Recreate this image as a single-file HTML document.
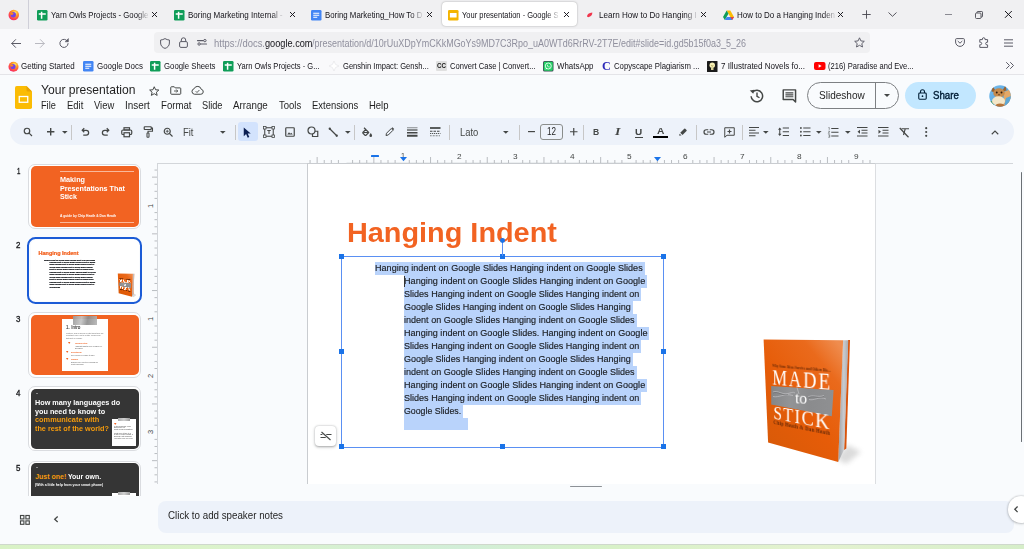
<!DOCTYPE html>
<html lang="en">
<head>
<meta charset="utf-8">
<title>Your presentation - Google Slides</title>
<style>
*{box-sizing:border-box;margin:0;padding:0}
html,body{width:1024px;height:549px;overflow:hidden;background:#f9fbfd;font-family:"Liberation Sans",sans-serif;color:#1f1f1f}
#root{position:relative;width:1024px;height:549px;overflow:hidden}
.a{position:absolute}
.t{position:absolute;white-space:nowrap;line-height:1}
svg{position:absolute;overflow:visible}
/* browser chrome */
#tabbar{left:0;top:0;width:1024px;height:29px;background:#f0f0f2}
#navbar{left:0;top:29px;width:1024px;height:27px;background:#f9f9fb}
#bmbar{left:0;top:56px;width:1024px;height:19px;background:#f9f9fb;border-bottom:1px solid #e4e4e8}
#urlbox{left:154px;top:32px;width:716px;height:21px;background:#f0f0f2;border-radius:4px}
#acttab{left:442.300px;top:2.400px;width:135px;height:24px;background:#fff;border-radius:4px;box-shadow:0 0 2px rgba(0,0,0,.35)}
.tab{font-size:10px;color:#15141a;top:10px}
.bm{font-size:10px;color:#15141a;top:62px}
/* slides */
#toolbar{left:10px;top:118.400px;width:1003.500px;height:26.700px;background:#edf2fa;border-radius:14px}
.menu{font-size:11px;color:#1f1f1f;top:101px}
</style>
</head>
<body>
<div id="root">
<!-- ===== BROWSER ===== -->
<div id="tabbar" class="a"></div>
<div id="navbar" class="a"></div>
<div id="bmbar" class="a"></div>
<div id="urlbox" class="a"></div>
<div id="acttab" class="a"></div>
<svg style="left:7.5px;top:9px" width="11.5" height="11.5" viewBox="0 0 24 24"><defs><radialGradient id="ffg7_9" cx="0.62" cy="0.3" r="0.85"><stop offset="0" stop-color="#fff36d"/><stop offset="0.35" stop-color="#ff9a1f"/><stop offset="0.7" stop-color="#ff3f4e"/><stop offset="1" stop-color="#e31587"/></radialGradient></defs><circle cx="12" cy="12.5" r="11" fill="url(#ffg7_9)"/><circle cx="11" cy="12" r="5.6" fill="#7542e5"/><path d="M5 8.5C7.5 7 10 7.2 12 9L9 12.5 5.5 12Z" fill="#ff8a16"/></svg>
<div class="a" style="left:28px;top:0;width:1px;height:29px;background:#cfcfd8"></div>
<svg style="left:37px;top:9.5px" width="10.5" height="10.5" viewBox="0 0 21 21"><rect width="21" height="21" rx="2.5" fill="#0f9d58"/><path d="M3.5 8.2H17.5M9.2 3.5V17.5" stroke="#fff" stroke-width="3" fill="none"/></svg>
<span class="t" style='left:50.70px;top:10.61px;font-size:9px;color:#15141a;transform:scaleX(0.8620);transform-origin:0 50%;-webkit-mask-image:linear-gradient(90deg,#000 88%,rgba(0,0,0,.12) 100%);mask-image:linear-gradient(90deg,#000 88%,rgba(0,0,0,.12) 100%);'>Yarn Owls Projects - Google</span>
<svg style="left:152.3px;top:12.3px" width="5.0" height="5.0" viewBox="0 0 5.0 5.0"><path d="M0 0L5.0 5.0M5.0 0L0 5.0" stroke="#15141a" stroke-width="0.95" fill="none"/></svg>
<svg style="left:174px;top:9.5px" width="10.5" height="10.5" viewBox="0 0 21 21"><rect width="21" height="21" rx="2.5" fill="#0f9d58"/><path d="M3.5 8.2H17.5M9.2 3.5V17.5" stroke="#fff" stroke-width="3" fill="none"/></svg>
<span class="t" style='left:188.00px;top:10.61px;font-size:9px;color:#15141a;transform:scaleX(0.8935);transform-origin:0 50%;-webkit-mask-image:linear-gradient(90deg,#000 88%,rgba(0,0,0,.12) 100%);mask-image:linear-gradient(90deg,#000 88%,rgba(0,0,0,.12) 100%);'>Boring Marketing Internal - </span>
<svg style="left:289.5px;top:12.3px" width="5.0" height="5.0" viewBox="0 0 5.0 5.0"><path d="M0 0L5.0 5.0M5.0 0L0 5.0" stroke="#15141a" stroke-width="0.95" fill="none"/></svg>
<svg style="left:311px;top:9.5px" width="10.5" height="10.5" viewBox="0 0 21 21"><rect width="21" height="21" rx="2.5" fill="#4285f4"/><path d="M4.5 6.5H16.5M4.5 10.5H16.5M4.5 14.5H12.5" stroke="#fff" stroke-width="2.2" fill="none"/></svg>
<span class="t" style='left:325.00px;top:10.61px;font-size:9px;color:#15141a;transform:scaleX(0.8714);transform-origin:0 50%;-webkit-mask-image:linear-gradient(90deg,#000 88%,rgba(0,0,0,.12) 100%);mask-image:linear-gradient(90deg,#000 88%,rgba(0,0,0,.12) 100%);'>Boring Marketing_How To D</span>
<svg style="left:427.0px;top:12.3px" width="5.0" height="5.0" viewBox="0 0 5.0 5.0"><path d="M0 0L5.0 5.0M5.0 0L0 5.0" stroke="#15141a" stroke-width="0.95" fill="none"/></svg>
<svg style="left:448px;top:9.5px" width="10.5" height="10.5" viewBox="0 0 21 21"><rect width="21" height="21" rx="2.5" fill="#f4b400"/><rect x="3.800" y="6" width="13.400" height="9" fill="#fff"/></svg>
<span class="t" style='left:462.00px;top:10.61px;font-size:9px;color:#15141a;transform:scaleX(0.8337);transform-origin:0 50%;-webkit-mask-image:linear-gradient(90deg,#000 88%,rgba(0,0,0,.12) 100%);mask-image:linear-gradient(90deg,#000 88%,rgba(0,0,0,.12) 100%);'>Your presentation - Google S</span>
<svg style="left:564.0px;top:12.3px" width="5.0" height="5.0" viewBox="0 0 5.0 5.0"><path d="M0 0L5.0 5.0M5.0 0L0 5.0" stroke="#15141a" stroke-width="0.95" fill="none"/></svg>
<svg style="left:586px;top:12px" width="8" height="6" viewBox="0 0 8 6"><path d="M1 4.5C1 2.5 3 .8 6.3 .6 6.6 2.8 5 5 2.2 5.2Z" fill="#f0364d"/></svg>
<span class="t" style='left:599.30px;top:10.61px;font-size:9px;color:#15141a;transform:scaleX(0.8999);transform-origin:0 50%;-webkit-mask-image:linear-gradient(90deg,#000 88%,rgba(0,0,0,.12) 100%);mask-image:linear-gradient(90deg,#000 88%,rgba(0,0,0,.12) 100%);'>Learn How to Do Hanging I</span>
<svg style="left:701.0px;top:12.3px" width="5.0" height="5.0" viewBox="0 0 5.0 5.0"><path d="M0 0L5.0 5.0M5.0 0L0 5.0" stroke="#15141a" stroke-width="0.95" fill="none"/></svg>
<svg style="left:723px;top:9.5px" width="11" height="11" viewBox="0 0 24 22"><path d="M8 0H16L24 14H16Z" fill="#fbbc04"/><path d="M8 0L0 14 4 21 12 7Z" fill="#0f9d58"/><path d="M4 21H20L24 14H8Z" fill="#4285f4"/><path d="M16 14H24L20 21Z" fill="#ea4335"/></svg>
<span class="t" style='left:737.00px;top:10.61px;font-size:9px;color:#15141a;transform:scaleX(0.8863);transform-origin:0 50%;-webkit-mask-image:linear-gradient(90deg,#000 88%,rgba(0,0,0,.12) 100%);mask-image:linear-gradient(90deg,#000 88%,rgba(0,0,0,.12) 100%);'>How to Do a Hanging Inden</span>
<svg style="left:838.0px;top:12.3px" width="5.0" height="5.0" viewBox="0 0 5.0 5.0"><path d="M0 0L5.0 5.0M5.0 0L0 5.0" stroke="#15141a" stroke-width="0.95" fill="none"/></svg>
<svg style="left:861.5px;top:10px" width="9" height="9" viewBox="0 0 9 9"><path d="M4.5 0.300V8.700M0.300 4.5H8.700" stroke="#45444d" stroke-width=".9" fill="none"/></svg>
<svg style="left:888px;top:12px" width="9" height="5" viewBox="0 0 9 5"><path d="M.5 .5L4.5 4.3 8.5 .5" stroke="#45444d" stroke-width=".9" fill="none"/></svg>
<div class="a" style="left:945px;top:14px;width:7px;height:1px;background:#8a8a92"></div>
<svg style="left:974.5px;top:10.5px" width="8" height="8" viewBox="0 0 8 8"><rect x=".5" y="2" width="5.5" height="5.5" rx="1" fill="none" stroke="#4a4a52" stroke-width=".9"/><path d="M2 2V1.2Q2 .5 2.8 .5H6.8Q7.5 .5 7.5 1.2V5.2Q7.5 6 6.8 6H6" fill="none" stroke="#4a4a52" stroke-width=".9"/></svg>
<svg style="left:1004.6px;top:11.1px" width="6.8" height="6.8" viewBox="0 0 6.8 6.8"><path d="M0 0L6.8 6.8M6.8 0L0 6.8" stroke="#15141a" stroke-width="1" fill="none"/></svg>
<svg style="left:11px;top:38.5px" width="10" height="9" viewBox="0 0 10 9"><path d="M4.6 .6L.8 4.5 4.6 8.4M.8 4.5H9.6" stroke="#5b5b66" stroke-width="1" fill="none" stroke-linecap="round" stroke-linejoin="round"/></svg>
<svg style="left:35px;top:38.5px" width="10" height="9" viewBox="0 0 10 9"><path d="M5.4 .6L9.2 4.5 5.4 8.4M9.2 4.5H.4" stroke="#b9b9c0" stroke-width="1" fill="none" stroke-linecap="round" stroke-linejoin="round"/></svg>
<svg style="left:59px;top:38px" width="10" height="10" viewBox="0 0 10 10"><path d="M8.6 3.4A4.1 4.1 0 1 0 9.1 5.6" stroke="#5b5b66" stroke-width="1" fill="none" stroke-linecap="round"/><path d="M9.400 .6V3.800H6.200Z" fill="#5b5b66" stroke="#5b5b66" stroke-width=".6" stroke-linejoin="round"/></svg>
<svg style="left:159.5px;top:37.5px" width="10" height="11" viewBox="0 0 10 11"><path d="M5 .6C6.4 1.5 7.9 1.9 9.4 2V5C9.4 7.8 7.4 9.7 5 10.4 2.6 9.7 .6 7.8 .6 5V2C2.1 1.9 3.6 1.5 5 .6Z" stroke="#5b5b66" stroke-width="1" fill="none" stroke-linejoin="round"/></svg>
<svg style="left:179px;top:37px" width="9" height="11" viewBox="0 0 9 11"><rect x=".6" y="4.6" width="7.8" height="5.8" rx="1.3" stroke="#5b5b66" stroke-width="1" fill="none"/><path d="M2.3 4.6V3A2.2 2.2 0 0 1 6.7 3V4.6" stroke="#5b5b66" stroke-width="1" fill="none"/></svg>
<svg style="left:197px;top:39.300px" width="10" height="6.600" viewBox="0 0 10 6.600"><path d="M.5 1.600H6.300M3.700 5H9.500" stroke="#5b5b66" stroke-width="1.150" fill="none" stroke-linecap="round"/><circle cx="7.900" cy="1.600" r="1.200" stroke="#5b5b66" stroke-width="1" fill="none"/><circle cx="2.100" cy="5" r="1.200" stroke="#5b5b66" stroke-width="1" fill="none"/></svg>
<span class="t" style='left:213.50px;top:38.13px;font-size:11px;color:#8f8f9d;transform:scaleX(0.8599);transform-origin:0 50%;'>https://docs.</span>
<span class="t" style='left:264.50px;top:38.13px;font-size:11px;color:#15141a;transform:scaleX(0.8352);transform-origin:0 50%;'>google.com</span>
<span class="t" style='left:312.00px;top:38.13px;font-size:11px;color:#8f8f9d;transform:scaleX(0.8157);transform-origin:0 50%;'>/presentation/d/10rUuXDpYmCKkMGoYs9MD7C3Rpo_uA0WTd6RrRV-2T7E/edit#slide=id.gd5b15f0a3_5_26</span>
<svg style="left:853.5px;top:37px" width="11" height="11" viewBox="0 0 11 11"><path d="M5.5 .8L6.9 3.9 10.3 4.3 7.8 6.6 8.5 10 5.5 8.3 2.5 10 3.2 6.6 .7 4.3 4.100 3.9Z" stroke="#5b5b66" stroke-width=".95" fill="none" stroke-linejoin="round"/></svg>
<svg style="left:955px;top:38px" width="10" height="9" viewBox="0 0 10 9"><path d="M1.6 .6H8.4Q9.4 .6 9.4 1.6V4A4.4 4.4 0 0 1 .6 4V1.6Q.6 .6 1.6 .6Z" stroke="#5b5b66" stroke-width="1" fill="none"/><path d="M3 3.3L5 5.2 7 3.3" stroke="#5b5b66" stroke-width="1" fill="none" stroke-linecap="round" stroke-linejoin="round"/></svg>
<svg style="left:979px;top:37px" width="10" height="11" viewBox="0 0 10 11"><path d="M3.4 2.6V2A1.3 1.3 0 0 1 6 2V2.6H8.6V5.2H8A1.35 1.35 0 0 0 8 7.9H8.600V10.400H.8V7.700H1.500A1.200 1.200 0 0 0 1.500 5.300H.8V2.600Z" stroke="#5b5b66" stroke-width="1" fill="none" stroke-linejoin="round"/></svg>
<svg style="left:1003.5px;top:39px" width="9" height="8" viewBox="0 0 9 8"><path d="M0 .8H9M0 4H9M0 7.2H9" stroke="#5b5b66" stroke-width="1" fill="none"/></svg>
<svg style="left:8px;top:60.5px" width="11" height="11" viewBox="0 0 24 24"><defs><radialGradient id="ffg8_60" cx="0.62" cy="0.3" r="0.85"><stop offset="0" stop-color="#fff36d"/><stop offset="0.35" stop-color="#ff9a1f"/><stop offset="0.7" stop-color="#ff3f4e"/><stop offset="1" stop-color="#e31587"/></radialGradient></defs><circle cx="12" cy="12.5" r="11" fill="url(#ffg8_60)"/><circle cx="11" cy="12" r="5.6" fill="#7542e5"/><path d="M5 8.5C7.5 7 10 7.2 12 9L9 12.5 5.5 12Z" fill="#ff8a16"/></svg>
<span class="t" style='left:21.30px;top:61.61px;font-size:9px;color:#15141a;transform:scaleX(0.8869);transform-origin:0 50%;'>Getting Started</span>
<svg style="left:83px;top:61px" width="10.5" height="10.5" viewBox="0 0 21 21"><rect width="21" height="21" rx="2.5" fill="#4285f4"/><path d="M4.5 6.5H16.5M4.5 10.5H16.5M4.5 14.5H12.5" stroke="#fff" stroke-width="2.2" fill="none"/></svg>
<span class="t" style='left:96.50px;top:61.61px;font-size:9px;color:#15141a;transform:scaleX(0.8841);transform-origin:0 50%;'>Google Docs</span>
<svg style="left:150px;top:61px" width="10.5" height="10.5" viewBox="0 0 21 21"><rect width="21" height="21" rx="2.5" fill="#0f9d58"/><path d="M3.5 8.2H17.5M9.2 3.5V17.5" stroke="#fff" stroke-width="3" fill="none"/></svg>
<span class="t" style='left:163.50px;top:61.61px;font-size:9px;color:#15141a;transform:scaleX(0.8649);transform-origin:0 50%;'>Google Sheets</span>
<svg style="left:223px;top:61px" width="10.5" height="10.5" viewBox="0 0 21 21"><rect width="21" height="21" rx="2.5" fill="#0f9d58"/><path d="M3.5 8.2H17.5M9.2 3.5V17.5" stroke="#fff" stroke-width="3" fill="none"/></svg>
<span class="t" style='left:236.50px;top:61.61px;font-size:9px;color:#15141a;transform:scaleX(0.8388);transform-origin:0 50%;'>Yarn Owls Projects - G...</span>
<svg style="left:329px;top:61px" width="10" height="10" viewBox="0 0 10 10"><path d="M5 0Q5.600 4.400 10 5 5.600 5.600 5 10 4.400 5.600 0 5 4.400 4.400 5 0Z" fill="#fff" stroke="#e3e3e6" stroke-width=".6"/></svg>
<span class="t" style='left:342.70px;top:61.61px;font-size:9px;color:#15141a;transform:scaleX(0.8407);transform-origin:0 50%;'>Genshin Impact: Gensh...</span>
<div class="a" style="left:436.200px;top:60.500px;width:10.800px;height:10.500px;background:#e0e0e0;border-radius:1px"></div>
<span class="t" style='left:437.20px;top:62.44px;font-size:7.5px;color:#1a1a1a;font-weight:700;transform:scaleX(0.8300);transform-origin:0 50%;'>CC</span>
<span class="t" style='left:449.50px;top:61.61px;font-size:9px;color:#15141a;transform:scaleX(0.8433);transform-origin:0 50%;'>Convert Case | Convert...</span>
<svg style="left:543px;top:61px" width="10.500" height="10.500" viewBox="0 0 21 21"><rect width="21" height="21" rx="3" fill="#3a4a52"/><rect x="1.5" y="1.5" width="18" height="18" rx="2.5" fill="#25d366"/><circle cx="10.500" cy="10" r="6" fill="none" stroke="#fff" stroke-width="1.600"/><path d="M5 17L6.300 13.500 8.500 15.500Z" fill="#fff"/><path d="M8 7.500C8 11 10.500 13 13 13L13.500 11.500 12 10.800 11.300 11.500C10.300 11.100 9.700 10.400 9.400 9.600L10 9 9.400 7.300Z" fill="#fff"/></svg>
<span class="t" style='left:556.50px;top:61.61px;font-size:9px;color:#15141a;transform:scaleX(0.8789);transform-origin:0 50%;'>WhatsApp</span>
<span class="t" style='left:601.60px;top:59.46px;font-size:13px;color:#2c28b8;font-weight:700;font-family:"Liberation Serif",serif;transform:scaleX(0.9371);transform-origin:0 50%;'>C</span>
<span class="t" style='left:614.00px;top:61.61px;font-size:9px;color:#15141a;transform:scaleX(0.8589);transform-origin:0 50%;'>Copyscape Plagiarism ...</span>
<svg style="left:707px;top:60.500px" width="10.500" height="11" viewBox="0 0 21 22"><rect width="21" height="22" rx="1" fill="#1b1b1b"/><circle cx="10.500" cy="8.500" r="5.500" fill="#f7f0b5"/><rect x="8" y="13" width="5" height="5" fill="#d9d29a"/><path d="M8.500 8L10.500 11 12.500 8" stroke="#8a7a2a" stroke-width="1" fill="none"/></svg>
<span class="t" style='left:720.50px;top:61.61px;font-size:9px;color:#15141a;transform:scaleX(0.8932);transform-origin:0 50%;'>7 Illustrated Novels fo...</span>
<svg style="left:814px;top:62px" width="11.500" height="8" viewBox="0 0 23 16"><rect width="23" height="16" rx="4" fill="#f00"/><path d="M9.200 4.300L15.300 8 9.200 11.700Z" fill="#fff"/></svg>
<span class="t" style='left:828.00px;top:61.61px;font-size:9px;color:#15141a;transform:scaleX(0.8377);transform-origin:0 50%;'>(216) Paradise and Eve...</span>
<svg style="left:1006px;top:62px" width="8" height="7" viewBox="0 0 8 7"><path d="M.5 .5L3.500 3.500 .5 6.500M4.500 .5L7.500 3.500 4.500 6.500" stroke="#5b5b66" stroke-width="1" fill="none" stroke-linejoin="round" stroke-linecap="round"/></svg>
<!-- ===== SLIDES HEADER ===== -->
<svg style="left:14.5px;top:85.700px" width="17" height="23" viewBox="0 0 34 46"><path d="M3.500 0H23L34 11V42.500Q34 46 30.500 46H3.500Q0 46 0 42.500V3.500Q0 0 3.500 0Z" fill="#fbbc04"/><path d="M23 0L34 11H26Q23 11 23 8Z" fill="#e8a303"/><rect x="8.500" y="21" width="17" height="11.500" fill="none" stroke="#fff" stroke-width="2.600"/></svg>
<span class="t" style='left:41.30px;top:82.81px;font-size:13.5px;color:#1f1f1f;transform:scaleX(0.8961);transform-origin:0 50%;'>Your presentation</span>
<svg style="left:149px;top:85.500px" width="10.500" height="10" viewBox="0 0 21 20"><path d="M10.500 1.500L13.200 7.500 19.700 8.100 14.800 12.400 16.300 18.800 10.500 15.400 4.700 18.800 6.200 12.400 1.300 8.100 7.800 7.500Z" fill="none" stroke="#444746" stroke-width="2" stroke-linejoin="round"/></svg>
<svg style="left:170px;top:86px" width="11.500" height="9" viewBox="0 0 23 18"><path d="M1.500 3Q1.500 1.500 3 1.500H8.500L10.500 3.800H20Q21.500 3.800 21.500 5.300V15Q21.500 16.500 20 16.500H3Q1.500 16.500 1.500 15Z" fill="none" stroke="#444746" stroke-width="2"/><path d="M8 10H15M12.500 7L15.500 10 12.500 13" fill="none" stroke="#444746" stroke-width="1.800"/></svg>
<svg style="left:190.500px;top:86px" width="13" height="9" viewBox="0 0 26 18"><path d="M7 16.500H19.500A5 5 0 0 0 20.500 6.600 7.500 7.500 0 0 0 6.200 5.500 5.600 5.600 0 0 0 7 16.500Z" fill="none" stroke="#444746" stroke-width="2"/><path d="M9.500 10.500L12 13 16.800 8" fill="none" stroke="#444746" stroke-width="1.800"/></svg>
<span class="t" style='left:41.20px;top:100.28px;font-size:10.5px;color:#1f1f1f;transform:scaleX(0.8746);transform-origin:0 50%;'>File</span>
<span class="t" style='left:66.70px;top:100.28px;font-size:10.5px;color:#1f1f1f;transform:scaleX(0.9009);transform-origin:0 50%;'>Edit</span>
<span class="t" style='left:94.00px;top:100.28px;font-size:10.5px;color:#1f1f1f;transform:scaleX(0.8947);transform-origin:0 50%;'>View</span>
<span class="t" style='left:124.70px;top:100.28px;font-size:10.5px;color:#1f1f1f;transform:scaleX(0.9442);transform-origin:0 50%;'>Insert</span>
<span class="t" style='left:160.50px;top:100.28px;font-size:10.5px;color:#1f1f1f;transform:scaleX(0.9169);transform-origin:0 50%;'>Format</span>
<span class="t" style='left:201.70px;top:100.28px;font-size:10.5px;color:#1f1f1f;transform:scaleX(0.8776);transform-origin:0 50%;'>Slide</span>
<span class="t" style='left:233.20px;top:100.28px;font-size:10.5px;color:#1f1f1f;transform:scaleX(0.9315);transform-origin:0 50%;'>Arrange</span>
<span class="t" style='left:279.00px;top:100.28px;font-size:10.5px;color:#1f1f1f;transform:scaleX(0.9055);transform-origin:0 50%;'>Tools</span>
<span class="t" style='left:312.00px;top:100.28px;font-size:10.5px;color:#1f1f1f;transform:scaleX(0.8993);transform-origin:0 50%;'>Extensions</span>
<span class="t" style='left:369.00px;top:100.28px;font-size:10.5px;color:#1f1f1f;transform:scaleX(0.9024);transform-origin:0 50%;'>Help</span>
<svg style="left:748.500px;top:88px" width="15" height="15" viewBox="0 0 30 30"><path d="M7 8.500A11.500 11.500 0 1 1 4.200 16.500" fill="none" stroke="#444746" stroke-width="3"/><path d="M1.500 5L8.500 11.500 10.500 3.500Z" fill="#444746"/><path d="M16 9V16.500L21 19.500" fill="none" stroke="#444746" stroke-width="2.800"/></svg>
<svg style="left:782.200px;top:89px" width="14.800" height="13.600" viewBox="0 0 30 27"><path d="M2.500 1.500H27.500V26L22.500 21H2.500Z" fill="none" stroke="#444746" stroke-width="3" stroke-linejoin="round"/><path d="M7 7.500H23M7 11.500H23M7 15.500H23" stroke="#444746" stroke-width="2.300" fill="none"/></svg>
<div class="a" style="left:807.200px;top:82px;width:92px;height:27px;border:1px solid #7d8083;border-radius:13.500px"></div>
<div class="a" style="left:875px;top:82.500px;width:1px;height:26px;background:#7d8083"></div>
<span class="t" style='left:818.70px;top:90.18px;font-size:10.5px;color:#1f1f1f;transform:scaleX(0.9567);transform-origin:0 50%;'>Slideshow</span>
<svg style="left:884px;top:94px" width="6" height="3" viewBox="0 0 6 3"><path d="M0 0H6L3 3Z" fill="#444746"/></svg>
<div class="a" style="left:904.500px;top:82px;width:71.500px;height:27px;background:#c2e7ff;border-radius:13.500px"></div>
<svg style="left:917.500px;top:89px" width="9" height="11" viewBox="0 0 18 22"><rect x="1.500" y="8" width="15" height="12.500" rx="1.800" fill="none" stroke="#001d35" stroke-width="2.200"/><path d="M5 8V5.500A4 4 0 0 1 13 5.500V8" fill="none" stroke="#001d35" stroke-width="2.200"/><circle cx="9" cy="14.300" r="1.700" fill="#001d35"/></svg>
<span class="t" style='left:933.30px;top:90.18px;font-size:10.5px;color:#001d35;transform:scaleX(0.9240);transform-origin:0 50%;-webkit-text-stroke:.4px #001d35;'>Share</span>
<svg style="left:989.200px;top:84.500px" width="22" height="22" viewBox="0 0 44 44"><defs><clipPath id="avc"><circle cx="22" cy="22" r="21.500"/></clipPath><linearGradient id="avbg" x1="0" y1="0" x2="1" y2="1"><stop offset="0" stop-color="#7cc0ee"/><stop offset="1" stop-color="#3f93d6"/></linearGradient></defs><g clip-path="url(#avc)"><rect width="44" height="44" fill="url(#avbg)"/><path d="M30 14L44 8V44H28Z" fill="#e3a868"/><path d="M34 26L44 22V44H30Z" fill="#5aa7d8"/><rect x="0" y="32" width="10" height="12" fill="#4f9a6a"/><path d="M7 1L15 15 5 13Z" fill="#9a6330"/><path d="M33 1L25 14 35 11Z" fill="#9a6330"/><ellipse cx="20" cy="16" rx="11.500" ry="9.500" fill="#c58a4c"/><circle cx="15.500" cy="15" r="1.900" fill="#2a1a10"/><circle cx="25" cy="15" r="1.900" fill="#2a1a10"/><ellipse cx="20" cy="19.500" rx="2" ry="1.200" fill="#5a3518"/><ellipse cx="19" cy="32" rx="13" ry="9.500" fill="#f3e6c8"/><ellipse cx="22" cy="42" rx="9" ry="5" fill="#b6743a"/></g></svg>
<div id="toolbar" class="a"></div>
<svg style="left:23.20px;top:127.00px" width="10" height="10" viewBox="0 0 20 20"><circle cx="8" cy="8" r="5.500" fill="none" stroke="#444746" stroke-width="2.400"/><path d="M12.200 12.200L18 18" fill="none" stroke="#444746" stroke-width="2.200"/></svg>
<svg style="left:46.80px;top:128.30px" width="7.4" height="7.4" viewBox="0 0 17 17"><path d="M8.500 0V17M0 8.500H17" fill="none" stroke="#444746" stroke-width="3.200"/></svg>
<svg style="left:61.900000000000006px;top:130.9px" width="5.600" height="2.800" viewBox="0 0 6 3"><path d="M0 0H6L3 3Z" fill="#444746"/></svg>
<div class="a" style="left:71.2px;top:124.500px;width:1px;height:15px;background:#c7c7c7"></div>
<svg style="left:79.50px;top:127.00px" width="10" height="10" viewBox="0 0 20 20"><path d="M5.500 6.500H12.500A4.700 4.700 0 0 1 12.500 16H6.500" fill="none" stroke="#444746" stroke-width="2.500"/><path d="M8.500 2.500L4.500 6.500 8.500 10.500" fill="none" stroke="#444746" stroke-width="2.500"/></svg>
<svg style="left:100.50px;top:127.00px" width="10" height="10" viewBox="0 0 20 20"><path d="M14.500 6.500H7.500A4.700 4.700 0 0 0 7.500 16H13.500" fill="none" stroke="#444746" stroke-width="2.500"/><path d="M11.500 2.500L15.500 6.500 11.500 10.500" fill="none" stroke="#444746" stroke-width="2.500"/></svg>
<svg style="left:120.75px;top:126.75px" width="11.5" height="10.5" viewBox="0 0 23 21"><rect x="6" y="1.500" width="11" height="4.500" fill="none" stroke="#444746" stroke-width="2.400"/><rect x="1.500" y="6" width="20" height="9" rx="2.500" fill="none" stroke="#444746" stroke-width="2.400"/><rect x="6" y="11.500" width="11" height="8" fill="#edf2fa" stroke="#444746" stroke-width="2.400"/></svg>
<svg style="left:142.50px;top:126.00px" width="10" height="12" viewBox="0 0 20 24"><rect x="2.500" y="1.500" width="14" height="5.500" rx="1" fill="none" stroke="#444746" stroke-width="2.400"/><path d="M16.500 4.200H19V10.500H10V14" fill="none" stroke="#444746" stroke-width="2.100"/><rect x="8" y="14" width="4" height="8.500" rx="1" fill="none" stroke="#444746" stroke-width="2.100"/></svg>
<svg style="left:162.95px;top:126.75px" width="10.5" height="10.5" viewBox="0 0 21 21"><circle cx="8.500" cy="8.500" r="6" fill="none" stroke="#444746" stroke-width="2.400"/><path d="M13 13L19 19" fill="none" stroke="#444746" stroke-width="2.200"/><path d="M8.500 5.500V11.500M5.500 8.500H11.500" fill="none" stroke="#444746" stroke-width="1.600"/></svg>
<span class="t" style='left:183.20px;top:126.88px;font-size:10.5px;color:#444746;transform:scaleX(0.8996);transform-origin:0 50%;'>Fit</span>
<svg style="left:219.89999999999998px;top:130.9px" width="5.600" height="2.800" viewBox="0 0 6 3"><path d="M0 0H6L3 3Z" fill="#444746"/></svg>
<div class="a" style="left:234.5px;top:124.500px;width:1px;height:15px;background:#c7c7c7"></div>
<div class="a" style="left:238px;top:122.200px;width:19.500px;height:19px;background:#d3e3fd;border-radius:3px"></div>
<svg style="left:243.00px;top:126.50px" width="8" height="11" viewBox="0 0 16 22"><path d="M1.500 1V18.500L6.200 14.200 9.400 21.500 12.600 20.100 9.400 13H15.500Z" fill="#0b1f52"/></svg>
<svg style="left:262.50px;top:126.00px" width="12" height="12" viewBox="0 0 24 24"><rect x="3.500" y="3.500" width="17" height="17" fill="none" stroke="#444746" stroke-width="2.100"/><g fill="#edf2fa" stroke="#444746" stroke-width="1.600"><rect x="1" y="1" width="5" height="5"/><rect x="18" y="1" width="5" height="5"/><rect x="1" y="18" width="5" height="5"/><rect x="18" y="18" width="5" height="5"/></g><path d="M8.500 9H15.500M12 9V16" fill="none" stroke="#444746" stroke-width="2.100"/></svg>
<svg style="left:285.00px;top:127.00px" width="10" height="10" viewBox="0 0 20 20"><rect x="1.500" y="1.500" width="17" height="17" rx="1.500" fill="none" stroke="#444746" stroke-width="2.400"/><path d="M4.500 15L8 10.500 10.500 13.500 12.500 11.500 15.500 15Z" fill="#444746"/></svg>
<svg style="left:306.75px;top:126.25px" width="11.5" height="11.5" viewBox="0 0 23 23"><circle cx="9" cy="9" r="7" fill="none" stroke="#444746" stroke-width="2.400"/><path d="M11 15.500V21H21.500V10.500H16" fill="none" stroke="#444746" stroke-width="2.400"/></svg>
<svg style="left:328.25px;top:126.75px" width="10.5" height="10.5" viewBox="0 0 21 21"><path d="M3.500 3.500L17.500 17.500" fill="none" stroke="#444746" stroke-width="2.400"/><circle cx="3.500" cy="3.500" r="2.300" fill="#444746"/><circle cx="17.500" cy="17.500" r="2.300" fill="#444746"/></svg>
<svg style="left:345.2px;top:130.9px" width="5.600" height="2.800" viewBox="0 0 6 3"><path d="M0 0H6L3 3Z" fill="#444746"/></svg>
<div class="a" style="left:354.2px;top:124.500px;width:1px;height:15px;background:#c7c7c7"></div>
<svg style="left:362.20px;top:126.75px" width="11" height="10.5" viewBox="0 0 22 21"><path d="M4 1.500L13.500 11 8 16.500Q7 17.500 6 16.500L2 12.500Q1 11.500 2 10.500L8.500 4" fill="none" stroke="#444746" stroke-width="2.200" stroke-linejoin="round"/><path d="M2.500 11H13" fill="none" stroke="#444746" stroke-width="2"/><path d="M17.500 12Q20.200 15.800 20.200 17.300A2.700 2.700 0 0 1 14.800 17.300Q14.800 15.800 17.500 12Z" fill="#444746"/></svg>
<svg style="left:385.45px;top:127.25px" width="9.5" height="9.5" viewBox="0 0 19 19"><path d="M2 17L3 12.500 12.500 3 16 6.500 6.500 16Z" fill="none" stroke="#444746" stroke-width="2" stroke-linejoin="round"/><path d="M14 1.500L17.500 5" fill="none" stroke="#444746" stroke-width="2.500"/></svg>
<svg style="left:407.45px;top:127.00px" width="10.5" height="10" viewBox="0 0 21 20"><path d="M0 1.500H21" fill="none" stroke="#444746" stroke-width="1.200"/><path d="M0 6H21" fill="none" stroke="#444746" stroke-width="2.400"/><path d="M0 11.500H21" fill="none" stroke="#444746" stroke-width="3"/><path d="M0 17.500H21" fill="none" stroke="#444746" stroke-width="4"/></svg>
<svg style="left:429.75px;top:127.00px" width="10.5" height="10" viewBox="0 0 21 20"><path d="M0 2H21" fill="none" stroke="#444746" stroke-width="3.500"/><path d="M0 8.500H21" fill="none" stroke="#444746" stroke-width="2" stroke-dasharray="5 2"/><path d="M0 13H21" fill="none" stroke="#444746" stroke-width="1.800" stroke-dasharray="2.500 1.500"/><path d="M0 17.500H21" fill="none" stroke="#444746" stroke-width="1.800" stroke-dasharray="1.500 1.500"/></svg>
<div class="a" style="left:448.7px;top:124.500px;width:1px;height:15px;background:#c7c7c7"></div>
<span class="t" style='left:459.70px;top:126.88px;font-size:10.5px;color:#444746;transform:scaleX(0.8954);transform-origin:0 50%;'>Lato</span>
<svg style="left:503.4px;top:130.9px" width="5.600" height="2.800" viewBox="0 0 6 3"><path d="M0 0H6L3 3Z" fill="#444746"/></svg>
<div class="a" style="left:518.5px;top:124.500px;width:1px;height:15px;background:#c7c7c7"></div>
<svg style="left:527.70px;top:131.40px" width="7" height="1.2" viewBox="0 0 7 1.200"><rect width="7" height="1.200" fill="#444746"/></svg>
<div class="a" style="left:540.200px;top:124px;width:22.500px;height:16px;border:1px solid #8a8d8b;border-radius:3px"></div>
<span class="t" style='left:547.20px;top:127.12px;font-size:10px;color:#1f1f1f;transform:scaleX(0.8090);transform-origin:0 50%;'>12</span>
<svg style="left:570.25px;top:128.25px" width="7.5" height="7.5" viewBox="0 0 15 15"><path d="M7.500 0V15M0 7.500H15" fill="none" stroke="#444746" stroke-width="2.400"/></svg>
<div class="a" style="left:583.2px;top:124.500px;width:1px;height:15px;background:#c7c7c7"></div>
<span class="t" style='left:593.40px;top:127.46px;font-size:9.5px;color:#444746;font-weight:700;transform:scaleX(0.9018);transform-origin:0 50%;'>B</span>
<span class="t" style='left:614.80px;top:127.22px;font-size:10px;color:#444746;font-weight:700;font-family:"Liberation Serif",serif;transform:scaleX(1.3824);transform-origin:0 50%;font-style:italic;'>I</span>
<span class="t" style='left:635.20px;top:126.76px;font-size:9.5px;color:#444746;font-weight:700;transform:scaleX(1.0473);transform-origin:0 50%;'>U</span>
<div class="a" style="left:634.500px;top:137px;width:8.500px;height:1.200px;background:#444746"></div>
<span class="t" style='left:656.80px;top:126.16px;font-size:9.5px;color:#444746;font-weight:700;transform:scaleX(1.0764);transform-origin:0 50%;'>A</span>
<div class="a" style="left:653px;top:135.500px;width:15px;height:2.500px;background:#000"></div>
<svg style="left:677.70px;top:127.00px" width="10" height="10" viewBox="0 0 20 20"><path d="M6 13L4.500 11.500 12.500 3.500Q13.500 2.500 14.500 3.500L17 6Q18 7 17 8L9 16 7.500 14.500" fill="#444746"/><path d="M3.500 13.500L7 17H2Z" fill="#444746"/></svg>
<div class="a" style="left:695.7px;top:124.500px;width:1px;height:15px;background:#c7c7c7"></div>
<svg style="left:702.70px;top:129.00px" width="12" height="6" viewBox="0 0 24 12"><path d="M10.500 1.500H6.500A4.500 4.500 0 0 0 6.500 10.500H10.500M13.500 1.500H17.500A4.500 4.500 0 0 1 17.500 10.500H13.500M8 6H16" fill="none" stroke="#444746" stroke-width="2.400"/></svg>
<svg style="left:724.20px;top:126.50px" width="11" height="11" viewBox="0 0 22 22"><path d="M1.500 1.500H20.500V16.500H6L1.500 20.500Z" fill="none" stroke="#444746" stroke-width="2" stroke-linejoin="round"/><path d="M11 5V13M7 9H15" fill="none" stroke="#444746" stroke-width="2.400"/></svg>
<div class="a" style="left:741.7px;top:124.500px;width:1px;height:15px;background:#c7c7c7"></div>
<svg style="left:748.70px;top:127.25px" width="10" height="9.5" viewBox="0 0 20 19"><path d="M0 1H20M0 6.500H13M0 12H20M0 17.500H13" fill="none" stroke="#444746" stroke-width="2.400"/></svg>
<svg style="left:763.2px;top:130.9px" width="5.600" height="2.800" viewBox="0 0 6 3"><path d="M0 0H6L3 3Z" fill="#444746"/></svg>
<svg style="left:778.00px;top:127.25px" width="11" height="9.5" viewBox="0 0 22 19"><path d="M9.500 2H22M9.500 9.500H22M9.500 17H22" fill="none" stroke="#444746" stroke-width="2.400"/><path d="M3.500 3V16" fill="none" stroke="#444746" stroke-width="2.100"/><path d="M0 5.500L3.500 1 7 5.500ZM0 13.500L3.500 18 7 13.500Z" fill="#444746"/></svg>
<svg style="left:799.95px;top:127.25px" width="10.5" height="9.5" viewBox="0 0 21 19"><path d="M6.500 2H21M6.500 9.500H21M6.500 17H21" fill="none" stroke="#444746" stroke-width="2.400"/><circle cx="1.800" cy="2" r="1.800" fill="#444746"/><circle cx="1.800" cy="9.500" r="1.800" fill="#444746"/><circle cx="1.800" cy="17" r="1.800" fill="#444746"/></svg>
<svg style="left:815.9000000000001px;top:130.9px" width="5.600" height="2.800" viewBox="0 0 6 3"><path d="M0 0H6L3 3Z" fill="#444746"/></svg>
<svg style="left:828.25px;top:126.75px" width="10.5" height="10.5" viewBox="0 0 21 21"><path d="M6.500 3H21M6.500 10.500H21M6.500 18H21" fill="none" stroke="#444746" stroke-width="2.400"/><path d="M1 1H2.500V5.500M.5 8.500H3.500L.5 12.500H3.500M.5 15.500H3.500V20.500H.5M1.500 18H3.500" fill="none" stroke="#444746" stroke-width="1.100"/></svg>
<svg style="left:844.7px;top:130.9px" width="5.600" height="2.800" viewBox="0 0 6 3"><path d="M0 0H6L3 3Z" fill="#444746"/></svg>
<svg style="left:857.45px;top:127.25px" width="10.5" height="9.5" viewBox="0 0 21 19"><path d="M0 1H21M9 6.500H21M9 12H21M0 18H21" fill="none" stroke="#444746" stroke-width="2.400"/><path d="M6 5.500L1 9.500 6 13.500Z" fill="#444746"/></svg>
<svg style="left:878.45px;top:127.25px" width="10.5" height="9.5" viewBox="0 0 21 19"><path d="M0 1H21M9 6.500H21M9 12H21M0 18H21" fill="none" stroke="#444746" stroke-width="2.400"/><path d="M1 5.500L6 9.500 1 13.500Z" fill="#444746"/></svg>
<svg style="left:899.00px;top:126.50px" width="11" height="11" viewBox="0 0 22 22"><path d="M5 3.500H20M12.500 3.500L9 16" fill="none" stroke="#444746" stroke-width="2.200"/><path d="M1.500 2L19 20.500" fill="none" stroke="#444746" stroke-width="2.400"/></svg>
<svg style="left:924.50px;top:127.00px" width="2.4" height="10" viewBox="0 0 2.400 10"><circle cx="1.200" cy="1.200" r="1.100" fill="#444746"/><circle cx="1.200" cy="5" r="1.100" fill="#444746"/><circle cx="1.200" cy="8.800" r="1.100" fill="#444746"/></svg>
<svg style="left:990.70px;top:130.10px" width="8" height="5" viewBox="0 0 16 10"><path d="M1.500 8.500L8 2 14.500 8.500" fill="none" stroke="#444746" stroke-width="2.200"/></svg>
<!-- ===== FILMSTRIP ===== -->
<div class="a" style="left:28.400px;top:164.1px;width:112.600px;height:64.9px;border:1px solid #dadce0;border-radius:7px;background:#fff"></div>
<div class="a" style="left:30.700px;top:166.300px;width:108px;height:60.500px;background:#f26322;border-radius:5px"></div>
<div class="a" style="left:59.800px;top:171px;width:74px;height:.6px;background:rgba(255,255,255,.55)"></div>
<div class="a" style="left:59.800px;top:222.200px;width:74px;height:.6px;background:rgba(255,255,255,.55)"></div>
<span class="t" style='left:59.80px;top:176.08px;font-size:7px;color:#fff;font-weight:700;transform:scaleX(1.0363);transform-origin:0 50%;'>Making</span>
<span class="t" style='left:59.80px;top:184.68px;font-size:7px;color:#fff;font-weight:700;transform:scaleX(1.0283);transform-origin:0 50%;'>Presentations That</span>
<span class="t" style='left:59.80px;top:193.08px;font-size:7px;color:#fff;font-weight:700;transform:scaleX(1.0159);transform-origin:0 50%;'>Stick</span>
<span class="t" style='left:59.80px;top:214.04px;font-size:14.4px;color:#fff;font-weight:700;transform:scale(0.2309,0.2500);transform-origin:0 0;'>A guide by Chip Heath &amp; Dan Heath</span>
<span class="t" style='left:17.00px;top:167.05px;font-size:8.5px;color:#202124;transform:scaleX(0.7182);transform-origin:0 50%;-webkit-text-stroke:.35px #202124;'>1</span>
<div class="a" style="left:27.400px;top:237px;width:114.600px;height:66.89999999999998px;border:2.200px solid #1b5bd6;border-radius:8.500px"></div>
<div class="a" style="left:30.700px;top:240px;width:108px;height:60.750px;background:#fff;border-radius:5px;overflow:hidden"><div class="a" style="left:0;top:0;width:568px;height:320px;transform-origin:0 0;transform:scale(.19014);-webkit-text-stroke:1.300px"><span class="t" style='left:39.60px;top:55.84px;font-size:28px;color:#f26322;font-weight:700;transform:scaleX(1.0301);transform-origin:0 50%;'>Hanging Indent</span>
<span class="t" style='left:68.30px;top:100.46px;font-size:9.4px;color:#1b1e22;transform:scaleX(0.9672);transform-origin:0 50%;'>Hanging indent on Google Slides Hanging indent on Google Slides</span>
<span class="t" style='left:96.80px;top:113.41px;font-size:9.4px;color:#1b1e22;transform:scaleX(0.9701);transform-origin:0 50%;'>Hanging indent on Google Slides Hanging indent on Google</span>
<span class="t" style='left:96.80px;top:126.36px;font-size:9.4px;color:#1b1e22;transform:scaleX(0.9642);transform-origin:0 50%;'>Slides Hanging indent on Google Slides Hanging indent on</span>
<span class="t" style='left:96.80px;top:139.31px;font-size:9.4px;color:#1b1e22;transform:scaleX(0.9622);transform-origin:0 50%;'>Google Slides Hanging indent on Google Slides Hanging</span>
<span class="t" style='left:96.80px;top:152.26px;font-size:9.4px;color:#1b1e22;transform:scaleX(0.9639);transform-origin:0 50%;'>indent on Google Slides Hanging indent on Google Slides</span>
<span class="t" style='left:96.80px;top:165.21px;font-size:9.4px;color:#1b1e22;transform:scaleX(0.9692);transform-origin:0 50%;'>Hanging indent on Google Slides. Hanging indent on Google</span>
<span class="t" style='left:96.80px;top:178.16px;font-size:9.4px;color:#1b1e22;transform:scaleX(0.9642);transform-origin:0 50%;'>Slides Hanging indent on Google Slides Hanging indent on</span>
<span class="t" style='left:96.80px;top:191.11px;font-size:9.4px;color:#1b1e22;transform:scaleX(0.9622);transform-origin:0 50%;'>Google Slides Hanging indent on Google Slides Hanging</span>
<span class="t" style='left:96.80px;top:204.06px;font-size:9.4px;color:#1b1e22;transform:scaleX(0.9639);transform-origin:0 50%;'>indent on Google Slides Hanging indent on Google Slides</span>
<span class="t" style='left:96.80px;top:217.01px;font-size:9.4px;color:#1b1e22;transform:scaleX(0.9701);transform-origin:0 50%;'>Hanging indent on Google Slides Hanging indent on Google</span>
<span class="t" style='left:96.80px;top:229.96px;font-size:9.4px;color:#1b1e22;transform:scaleX(0.9642);transform-origin:0 50%;'>Slides Hanging indent on Google Slides Hanging indent on</span>
<span class="t" style='left:96.80px;top:242.91px;font-size:9.4px;color:#1b1e22;transform:scaleX(0.9379);transform-origin:0 50%;'>Google Slides.</span>
<svg style="left:0;top:0" width="568" height="320" viewBox="0 0 568 320"><defs><filter id="tbs" x="-50%" y="-50%" width="200%" height="200%"><feGaussianBlur stdDeviation="2.800"/></filter><linearGradient id="tpg" x1="0" y1="0" x2="1" y2="0"><stop offset="0" stop-color="#9b9ea3"/><stop offset=".55" stop-color="#c9cbcf"/><stop offset="1" stop-color="#a9abaf"/></linearGradient><linearGradient id="tcv" x1="0.1" y1="1" x2="0.9" y2="0"><stop offset="0" stop-color="#d75a08"/><stop offset=".45" stop-color="#e65c08"/><stop offset=".8" stop-color="#ea6a1c"/><stop offset="1" stop-color="#ef8c4e"/></linearGradient><linearGradient id="ttp" x1="0" y1="0" x2="1" y2="0"><stop offset="0" stop-color="#858688"/><stop offset=".3" stop-color="#939496"/><stop offset=".6" stop-color="#8a8b8d"/><stop offset="1" stop-color="#8f9092"/></linearGradient></defs><path d="M529.00 295.00L539.00 301.00 554.00 289.00 541.00 282.00Z" fill="#8a8a8a" opacity=".3" filter="url(#tbs)"/><path d="M541.00 177.10L543.00 176.90 539.30 285.50 537.00 287.00Z" fill="#d9540c"/><path d="M536.00 177.20L541.30 177.30 537.20 286.50 531.20 298.90Z" fill="url(#tpg)"/><path d="M456.60 176.50L536.10 177.20 531.20 298.90 461.10 279.60Z" fill="url(#tcv)"/></svg>
<span class="t" style='left:0;top:0;font-size:3px;color:#6b2a06;font-family:"Liberation Serif",serif;transform-origin:0 0;transform:matrix3d(0.194161,-0.253775,0,-0.00166519,1.35745e-13,1.01781,0,2.62631e-16,0,0,1,0,465.4,201.843,0,1);font-weight:700;'>Why Some Ideas Survive and Others Die...</span>
<span class="t" style='left:0;top:0;font-size:20px;color:#fff;font-family:"Liberation Serif",serif;transform-origin:0 0;transform:matrix3d(0.0790385,-0.266944,0,-0.0015514,4.75109e-14,1.0229,0,1.06739e-16,0,0,1,0,465.4,204.066,0,1);letter-spacing:2px;'>MADE</span>
<svg style="left:0;top:0" width="568" height="320" viewBox="0 0 568 320"><path d="M464.20 223.00L526.60 227.10 524.80 253.20 464.20 241.50Z" fill="url(#ttp)"/><path d="M466.00 229.00C471.00 227.00 475.00 232.00 481.00 230.50S486.00 229.00 488.00 230.00M466.00 233.50C472.00 235.00 477.00 230.00 486.00 232.50M501.00 234.00C506.00 231.00 511.00 235.00 517.00 232.50M502.00 236.50C507.00 238.00 512.00 233.00 519.00 236.00M490.00 224.50L492.00 231.00" stroke="#c9cacc" stroke-width=".8" fill="none" opacity=".75"/><path d="M466.00 230.00C471.00 228.00 475.00 233.00 481.00 231.50M501.00 235.00C506.00 232.00 511.00 236.00 517.00 233.50" stroke="#5d5e60" stroke-width=".7" fill="none" opacity=".6"/></svg>
<span class="t" style='left:0;top:0;font-size:17px;color:#fff;font-family:"Liberation Serif",serif;transform-origin:0 0;transform:matrix3d(1.27713,0.216311,0,0.000740792,-4.67124e-13,0.97723,0,-9.51341e-16,0,0,1,0,488,226.587,0,1);'>to</span>
<span class="t" style='left:0;top:0;font-size:20px;color:#fff;font-family:"Liberation Serif",serif;transform-origin:0 0;transform:matrix3d(-0.335556,-0.453116,0,-0.00232219,5.09046e-14,0.877863,0,1.1043e-16,0,0,1,0,466.5,240.796,0,1);letter-spacing:1.5px;'>STICK</span>
<span class="t" style='left:0;top:0;font-size:5.5px;color:#6b2a06;font-family:"Liberation Serif",serif;transform-origin:0 0;transform:matrix3d(0.236154,-0.158934,0,-0.00122571,1.97448e-13,0.971548,0,3.98012e-16,0,0,1,0,466.5,257.025,0,1);font-weight:700;letter-spacing:0.2px;'>Chip Heath &amp; Dan Heath</span></div></div>
<span class="t" style='left:15.90px;top:241.25px;font-size:8.5px;color:#202124;transform:scaleX(0.9294);transform-origin:0 50%;-webkit-text-stroke:.35px #202124;'>2</span>
<div class="a" style="left:28.400px;top:312px;width:112.600px;height:65.60000000000002px;border:1px solid #dadce0;border-radius:7px;background:#fff"></div>
<div class="a" style="left:30.700px;top:314.600px;width:108px;height:60.500px;background:#f26322;border-radius:5px"></div>
<div class="a" style="left:61.500px;top:318.600px;width:46.800px;height:52.800px;background:#fff"></div>
<div class="a" style="left:72.800px;top:315.800px;width:23.900px;height:8.800px;background:linear-gradient(100deg,#9a9a9a,#c4c4c4 35%,#8e8e8e 60%,#b5b5b5);opacity:.92"></div>
<span class="t" style='left:65.60px;top:324.66px;font-size:20.8px;color:#444;transform:scale(0.2224,0.2500);transform-origin:0 0;-webkit-text-stroke:.5px;'>1. Intro</span>
<span class="t" style='left:65.50px;top:331.77px;font-size:7.6px;color:#666;transform:scale(0.2278,0.2500);transform-origin:0 0;'>Whatever kind of speech or pitch this is there are</span>
<span class="t" style='left:65.50px;top:334.27px;font-size:7.6px;color:#666;transform:scale(0.2059,0.2500);transform-origin:0 0;'>essentials to open. First of all state, a simple plain</span>
<span class="t" style='left:65.50px;top:336.67px;font-size:7.6px;color:#666;transform:scale(0.2079,0.2500);transform-origin:0 0;'>statement, for example.</span>
<svg style="left:67.8px;top:341.9px" width="2.400" height="2" viewBox="0 0 2.400 2"><path d="M0 0H2.400L1.200 2Z" fill="#f26322"/></svg>
<span class="t" style='left:75.00px;top:341.83px;font-size:8.8px;color:#f26322;font-weight:700;transform:scale(0.2446,0.2500);transform-origin:0 0;'>Unexpected</span>
<span class="t" style='left:75.00px;top:344.57px;font-size:7.6px;color:#555;transform:scale(0.2444,0.2500);transform-origin:0 0;'>Highlight what’s new, unusual, or</span>
<span class="t" style='left:75.00px;top:346.97px;font-size:7.6px;color:#555;transform:scale(0.2284,0.2500);transform-origin:0 0;'>surprising.</span>
<svg style="left:66.3px;top:351.2px" width="2.400" height="2" viewBox="0 0 2.400 2"><path d="M0 0H2.400L1.200 2Z" fill="#f26322"/></svg>
<span class="t" style='left:71.00px;top:351.13px;font-size:8.8px;color:#f26322;font-weight:700;transform:scale(0.2469,0.2500);transform-origin:0 0;'>Emotional</span>
<span class="t" style='left:71.00px;top:353.87px;font-size:7.6px;color:#555;transform:scale(0.2409,0.2500);transform-origin:0 0;'>Give people a reason to care.</span>
<svg style="left:66.3px;top:358px" width="2.400" height="2" viewBox="0 0 2.400 2"><path d="M0 0H2.400L1.200 2Z" fill="#f26322"/></svg>
<span class="t" style='left:71.00px;top:357.93px;font-size:8.8px;color:#f26322;font-weight:700;transform:scale(0.2496,0.2500);transform-origin:0 0;'>Simple</span>
<span class="t" style='left:71.00px;top:360.67px;font-size:7.6px;color:#555;transform:scale(0.2118,0.2500);transform-origin:0 0;'>Describe how you’ll they’ll manage for</span>
<span class="t" style='left:71.00px;top:363.07px;font-size:7.6px;color:#555;transform:scale(0.2215,0.2500);transform-origin:0 0;'>a fast conclusion.</span>
<span class="t" style='left:15.90px;top:314.65px;font-size:8.5px;color:#202124;transform:scaleX(0.9294);transform-origin:0 50%;-webkit-text-stroke:.35px #202124;'>3</span>
<div class="a" style="left:28.400px;top:386.3px;width:112.600px;height:65.09999999999997px;border:1px solid #dadce0;border-radius:7px;background:#fff"></div>
<div class="a" style="left:30.700px;top:388.600px;width:108px;height:60.500px;background:#353535;border-radius:5px"></div>
<div class="a" style="left:36px;top:393px;width:2px;height:.5px;background:#888"></div>
<span class="t" style='left:34.90px;top:398.98px;font-size:7px;color:#fff;font-weight:700;transform:scaleX(1.0368);transform-origin:0 50%;'>How many languages do</span>
<span class="t" style='left:34.90px;top:407.58px;font-size:7px;color:#fff;font-weight:700;transform:scaleX(1.0359);transform-origin:0 50%;'>you need to know to</span>
<span class="t" style='left:34.90px;top:416.38px;font-size:7px;color:#f59b0c;font-weight:700;transform:scaleX(1.0528);transform-origin:0 50%;'>communicate with</span>
<span class="t" style='left:34.90px;top:424.88px;font-size:7px;color:#f59b0c;font-weight:700;transform:scaleX(1.0383);transform-origin:0 50%;'>the rest of the world?</span>
<div class="a" style="left:112.100px;top:419px;width:24.100px;height:27.400px;background:#fff"></div>
<div class="a" style="left:118.300px;top:417.900px;width:11.700px;height:3.600px;background:linear-gradient(90deg,#aaa,#d0d0d0,#999)"></div>
<svg style="left:113.500px;top:422.500px" width="2.500" height="2" viewBox="0 0 2.500 2"><path d="M0 0H2.500L1.200 2Z" fill="#f26322"/></svg>
<span class="t" style='left:113.60px;top:425.67px;font-size:6.8px;color:#444;transform:scale(0.2571,0.2500);transform-origin:0 0;'>In the business, a fine</span>
<span class="t" style='left:113.60px;top:427.37px;font-size:6.8px;color:#444;transform:scale(0.2531,0.2500);transform-origin:0 0;'>statement: our</span>
<span class="t" style='left:113.60px;top:429.07px;font-size:6.8px;color:#444;transform:scale(0.2703,0.2500);transform-origin:0 0;'>most-loved proposition.</span>
<span class="t" style='left:113.60px;top:432.77px;font-size:6.8px;color:#444;transform:scale(0.2586,0.2500);transform-origin:0 0;'>What does it take to a</span>
<span class="t" style='left:113.60px;top:434.47px;font-size:6.8px;color:#444;transform:scale(0.2661,0.2500);transform-origin:0 0;'>to say in fewer words, a</span>
<span class="t" style='left:113.60px;top:436.17px;font-size:6.8px;color:#444;transform:scale(0.2508,0.2500);transform-origin:0 0;'>summary with meaning.</span>
<span class="t" style='left:113.60px;top:437.87px;font-size:6.8px;color:#444;transform:scale(0.2506,0.2500);transform-origin:0 0;'>Here’s the one you need.</span>
<span class="t" style='left:15.90px;top:389.15px;font-size:8.5px;color:#202124;transform:scaleX(0.9294);transform-origin:0 50%;-webkit-text-stroke:.35px #202124;'>4</span>
<div class="a" style="left:0;top:455px;width:146px;height:40.600px;overflow:hidden"><div class="a" style="left:28.400px;top:5.500px;width:112.600px;height:66px;border:1px solid #dadce0;border-radius:7px;background:#fff"></div><div class="a" style="left:30.700px;top:8px;width:108px;height:60.500px;background:#353535;border-radius:5px"></div><div class="a" style="left:36px;top:12.300px;width:2px;height:.5px;background:#888"></div><div class="a" style="left:112.100px;top:37.900px;width:24px;height:10px;background:#fff"></div><div class="a" style="left:117.500px;top:36.500px;width:12.700px;height:3.200px;background:linear-gradient(90deg,#aaa,#d0d0d0,#999)"></div></div>
<span class="t" style='left:35.20px;top:473.28px;font-size:7px;color:#f59b0c;font-weight:700;'>Just one!</span>
<span class="t" style='left:68.40px;top:473.28px;font-size:7px;color:#fff;font-weight:700;transform:scaleX(0.9936);transform-origin:0 50%;'>Your own.</span>
<span class="t" style='left:35.20px;top:482.54px;font-size:14.4px;color:#fff;font-weight:700;transform:scale(0.2421,0.2500);transform-origin:0 0;'>(With a little help from your smart phone)</span>
<span class="t" style='left:15.90px;top:463.55px;font-size:8.5px;color:#202124;transform:scaleX(0.9294);transform-origin:0 50%;-webkit-text-stroke:.35px #202124;'>5</span>
<!-- ===== CANVAS ===== -->
<div class="a" style="left:157px;top:163px;width:856px;height:321px;border-left:1px solid #d3d6da;border-top:1px solid #d3d6da"></div>
<svg style="left:307px;top:150px" width="568" height="14" viewBox="0 0 568 14"><path d="M0 13.500H568" stroke="#cfd2d6" stroke-width="1" fill="none"/><path d="M39.500 13.400H350.500" stroke="#7d8186" stroke-width="1" fill="none"/><path d="M3.06 10V13M10.15 7V13M17.24 10V13M24.32 10V13M31.41 10V13M45.59 10V13M52.68 10V13M59.76 10V13M66.85 7V13M73.94 10V13M81.02 10V13M88.11 10V13M102.29 10V13M109.38 10V13M116.46 10V13M123.55 7V13M130.64 10V13M137.73 10V13M144.81 10V13M158.99 10V13M166.07 10V13M173.16 10V13M180.25 7V13M187.34 10V13M194.43 10V13M201.51 10V13M215.69 10V13M222.77 10V13M229.86 10V13M236.95 7V13M244.04 10V13M251.12 10V13M258.21 10V13M272.39 10V13M279.48 10V13M286.56 10V13M293.65 7V13M300.74 10V13M307.83 10V13M314.91 10V13M329.09 10V13M336.17 10V13M343.26 10V13M350.35 7V13M357.44 10V13M364.53 10V13M371.61 10V13M385.79 10V13M392.88 10V13M399.96 10V13M407.05 7V13M414.14 10V13M421.23 10V13M428.31 10V13M442.49 10V13M449.58 10V13M456.66 10V13M463.75 7V13M470.84 10V13M477.92 10V13M485.01 10V13M499.19 10V13M506.28 10V13M513.36 10V13M520.45 7V13M527.54 10V13M534.62 10V13M541.71 10V13M555.89 10V13M562.98 10V13" stroke="#b2b5ba" stroke-width=".9" fill="none"/></svg>
<span class="t" style='left:456.60px;top:153.14px;font-size:7.5px;color:#444746;transform:scaleX(1.1026);transform-origin:0 50%;'>2</span>
<span class="t" style='left:513.30px;top:153.14px;font-size:7.5px;color:#444746;transform:scaleX(1.1026);transform-origin:0 50%;'>3</span>
<span class="t" style='left:570.00px;top:153.14px;font-size:7.5px;color:#444746;transform:scaleX(1.1026);transform-origin:0 50%;'>4</span>
<span class="t" style='left:626.70px;top:153.14px;font-size:7.5px;color:#444746;transform:scaleX(1.1026);transform-origin:0 50%;'>5</span>
<span class="t" style='left:683.40px;top:153.14px;font-size:7.5px;color:#444746;transform:scaleX(1.1026);transform-origin:0 50%;'>6</span>
<span class="t" style='left:740.10px;top:153.14px;font-size:7.5px;color:#444746;transform:scaleX(1.1026);transform-origin:0 50%;'>7</span>
<span class="t" style='left:796.80px;top:153.14px;font-size:7.5px;color:#444746;transform:scaleX(1.1026);transform-origin:0 50%;'>8</span>
<span class="t" style='left:853.50px;top:153.14px;font-size:7.5px;color:#444746;transform:scaleX(1.1026);transform-origin:0 50%;'>9</span>
<span class="t" style='left:400.80px;top:152.14px;font-size:7.5px;color:#444746;transform:scaleX(0.9588);transform-origin:0 50%;'>1</span>
<div class="a" style="left:371.200px;top:154.700px;width:7.800px;height:2.600px;background:#1a73e8;border-radius:.5px"></div>
<svg style="left:399.900px;top:157.300px" width="7" height="4.200" viewBox="0 0 7 4.200"><path d="M0 0H7L3.500 4.200Z" fill="#1a73e8"/></svg>
<svg style="left:653.800px;top:157.300px" width="7" height="4.200" viewBox="0 0 7 4.200"><path d="M0 0H7L3.500 4.200Z" fill="#1a73e8"/></svg>
<svg style="left:146px;top:163px" width="11" height="321" viewBox="0 0 11 321"><path d="M8.5 7.06H11M6 14.15H11M8.5 21.24H11M8.5 28.32H11M8.5 35.41H11M8.5 49.59H11M8.5 56.67H11M8.5 63.76H11M6 70.85H11M8.5 77.94H11M8.5 85.02H11M8.5 92.11H11M8.5 106.29H11M8.5 113.38H11M8.5 120.46H11M6 127.55H11M8.5 134.64H11M8.5 141.73H11M8.5 148.81H11M8.5 162.99H11M8.5 170.07H11M8.5 177.16H11M6 184.25H11M8.5 191.34H11M8.5 198.43H11M8.5 205.51H11M8.5 219.69H11M8.5 226.77H11M8.5 233.86H11M6 240.95H11M8.5 248.04H11M8.5 255.12H11M8.5 262.21H11M8.5 276.39H11M8.5 283.48H11M8.5 290.56H11M6 297.65H11M8.5 304.74H11M8.5 311.82H11M8.5 318.91H11" stroke="#b2b5ba" stroke-width=".9" fill="none"/></svg>
<span class="t" style="left:146.500px;top:201.50px;width:8px;height:8px;font-size:7.500px;color:#444746;text-align:center;transform:rotate(-90deg);line-height:8px">1</span>
<span class="t" style="left:146.500px;top:314.90px;width:8px;height:8px;font-size:7.500px;color:#444746;text-align:center;transform:rotate(-90deg);line-height:8px">1</span>
<span class="t" style="left:146.500px;top:371.60px;width:8px;height:8px;font-size:7.500px;color:#444746;text-align:center;transform:rotate(-90deg);line-height:8px">2</span>
<span class="t" style="left:146.500px;top:428.30px;width:8px;height:8px;font-size:7.500px;color:#444746;text-align:center;transform:rotate(-90deg);line-height:8px">3</span>
<div class="a" style="left:307px;top:163px;width:568.500px;height:320.500px;background:#fff;border-left:1px solid #c9ccd0;border-top:1px solid #c9ccd0;border-right:1px solid #dcdee1"></div>
<div class="a" id="slide" style="left:307px;top:163px;width:568px;height:320px"><span class="t" style='left:39.60px;top:55.84px;font-size:28px;color:#f26322;font-weight:700;transform:scaleX(1.0301);transform-origin:0 50%;'>Hanging Indent</span>
<div class="a" style="left:68.19999999999999px;top:99.30000000000001px;width:269.8px;height:13px;background:#b9d3fb"></div>
<div class="a" style="left:96.69999999999999px;top:112.00px;width:243.50px;height:13.300px;background:#b9d3fb"></div>
<div class="a" style="left:96.69999999999999px;top:125.00px;width:237.50px;height:13.300px;background:#b9d3fb"></div>
<div class="a" style="left:96.69999999999999px;top:138.00px;width:229.00px;height:13.300px;background:#b9d3fb"></div>
<div class="a" style="left:96.69999999999999px;top:151.00px;width:232.90px;height:13.300px;background:#b9d3fb"></div>
<div class="a" style="left:96.69999999999999px;top:164.00px;width:245.80px;height:13.300px;background:#b9d3fb"></div>
<div class="a" style="left:96.69999999999999px;top:177.00px;width:237.50px;height:13.300px;background:#b9d3fb"></div>
<div class="a" style="left:96.69999999999999px;top:190.00px;width:229.00px;height:13.300px;background:#b9d3fb"></div>
<div class="a" style="left:96.69999999999999px;top:203.00px;width:232.90px;height:13.300px;background:#b9d3fb"></div>
<div class="a" style="left:96.69999999999999px;top:216.00px;width:243.50px;height:13.300px;background:#b9d3fb"></div>
<div class="a" style="left:96.69999999999999px;top:229.00px;width:237.50px;height:13.300px;background:#b9d3fb"></div>
<div class="a" style="left:96.69999999999999px;top:242.00px;width:59.50px;height:13.300px;background:#b9d3fb"></div>
<div class="a" style="left:96.69999999999999px;top:255.00px;width:64px;height:12px;background:#b9d3fb"></div>
<span class="t" style='left:68.30px;top:100.46px;font-size:9.4px;color:#1b1e22;transform:scaleX(0.9672);transform-origin:0 50%;-webkit-text-stroke:.16px;'>Hanging indent on Google Slides Hanging indent on Google Slides</span>
<span class="t" style='left:96.80px;top:113.41px;font-size:9.4px;color:#1b1e22;transform:scaleX(0.9701);transform-origin:0 50%;-webkit-text-stroke:.16px;'>Hanging indent on Google Slides Hanging indent on Google</span>
<span class="t" style='left:96.80px;top:126.36px;font-size:9.4px;color:#1b1e22;transform:scaleX(0.9642);transform-origin:0 50%;-webkit-text-stroke:.16px;'>Slides Hanging indent on Google Slides Hanging indent on</span>
<span class="t" style='left:96.80px;top:139.31px;font-size:9.4px;color:#1b1e22;transform:scaleX(0.9622);transform-origin:0 50%;-webkit-text-stroke:.16px;'>Google Slides Hanging indent on Google Slides Hanging</span>
<span class="t" style='left:96.80px;top:152.26px;font-size:9.4px;color:#1b1e22;transform:scaleX(0.9639);transform-origin:0 50%;-webkit-text-stroke:.16px;'>indent on Google Slides Hanging indent on Google Slides</span>
<span class="t" style='left:96.80px;top:165.21px;font-size:9.4px;color:#1b1e22;transform:scaleX(0.9692);transform-origin:0 50%;-webkit-text-stroke:.16px;'>Hanging indent on Google Slides. Hanging indent on Google</span>
<span class="t" style='left:96.80px;top:178.16px;font-size:9.4px;color:#1b1e22;transform:scaleX(0.9642);transform-origin:0 50%;-webkit-text-stroke:.16px;'>Slides Hanging indent on Google Slides Hanging indent on</span>
<span class="t" style='left:96.80px;top:191.11px;font-size:9.4px;color:#1b1e22;transform:scaleX(0.9622);transform-origin:0 50%;-webkit-text-stroke:.16px;'>Google Slides Hanging indent on Google Slides Hanging</span>
<span class="t" style='left:96.80px;top:204.06px;font-size:9.4px;color:#1b1e22;transform:scaleX(0.9639);transform-origin:0 50%;-webkit-text-stroke:.16px;'>indent on Google Slides Hanging indent on Google Slides</span>
<span class="t" style='left:96.80px;top:217.01px;font-size:9.4px;color:#1b1e22;transform:scaleX(0.9701);transform-origin:0 50%;-webkit-text-stroke:.16px;'>Hanging indent on Google Slides Hanging indent on Google</span>
<span class="t" style='left:96.80px;top:229.96px;font-size:9.4px;color:#1b1e22;transform:scaleX(0.9642);transform-origin:0 50%;-webkit-text-stroke:.16px;'>Slides Hanging indent on Google Slides Hanging indent on</span>
<span class="t" style='left:96.80px;top:242.91px;font-size:9.4px;color:#1b1e22;transform:scaleX(0.9379);transform-origin:0 50%;-webkit-text-stroke:.16px;'>Google Slides.</span>
<svg style="left:0;top:0" width="568" height="320" viewBox="0 0 568 320"><defs><filter id="mbs" x="-50%" y="-50%" width="200%" height="200%"><feGaussianBlur stdDeviation="2.800"/></filter><linearGradient id="mpg" x1="0" y1="0" x2="1" y2="0"><stop offset="0" stop-color="#9b9ea3"/><stop offset=".55" stop-color="#c9cbcf"/><stop offset="1" stop-color="#a9abaf"/></linearGradient><linearGradient id="mcv" x1="0.1" y1="1" x2="0.9" y2="0"><stop offset="0" stop-color="#d75a08"/><stop offset=".45" stop-color="#e65c08"/><stop offset=".8" stop-color="#ea6a1c"/><stop offset="1" stop-color="#ef8c4e"/></linearGradient><linearGradient id="mtp" x1="0" y1="0" x2="1" y2="0"><stop offset="0" stop-color="#858688"/><stop offset=".3" stop-color="#939496"/><stop offset=".6" stop-color="#8a8b8d"/><stop offset="1" stop-color="#8f9092"/></linearGradient></defs><path d="M529.00 295.00L539.00 301.00 554.00 289.00 541.00 282.00Z" fill="#8a8a8a" opacity=".3" filter="url(#mbs)"/><path d="M541.00 177.10L543.00 176.90 539.30 285.50 537.00 287.00Z" fill="#d9540c"/><path d="M536.00 177.20L541.30 177.30 537.20 286.50 531.20 298.90Z" fill="url(#mpg)"/><path d="M456.60 176.50L536.10 177.20 531.20 298.90 461.10 279.60Z" fill="url(#mcv)"/></svg>
<span class="t" style='left:0;top:0;font-size:3px;color:#6b2a06;font-family:"Liberation Serif",serif;transform-origin:0 0;transform:matrix3d(0.194161,-0.253775,0,-0.00166519,1.35745e-13,1.01781,0,2.62631e-16,0,0,1,0,465.4,201.843,0,1);font-weight:700;'>Why Some Ideas Survive and Others Die...</span>
<span class="t" style='left:0;top:0;font-size:20px;color:#fff;font-family:"Liberation Serif",serif;transform-origin:0 0;transform:matrix3d(0.0790385,-0.266944,0,-0.0015514,4.75109e-14,1.0229,0,1.06739e-16,0,0,1,0,465.4,204.066,0,1);letter-spacing:2px;'>MADE</span>
<svg style="left:0;top:0" width="568" height="320" viewBox="0 0 568 320"><path d="M464.20 223.00L526.60 227.10 524.80 253.20 464.20 241.50Z" fill="url(#mtp)"/><path d="M466.00 229.00C471.00 227.00 475.00 232.00 481.00 230.50S486.00 229.00 488.00 230.00M466.00 233.50C472.00 235.00 477.00 230.00 486.00 232.50M501.00 234.00C506.00 231.00 511.00 235.00 517.00 232.50M502.00 236.50C507.00 238.00 512.00 233.00 519.00 236.00M490.00 224.50L492.00 231.00" stroke="#c9cacc" stroke-width=".8" fill="none" opacity=".75"/><path d="M466.00 230.00C471.00 228.00 475.00 233.00 481.00 231.50M501.00 235.00C506.00 232.00 511.00 236.00 517.00 233.50" stroke="#5d5e60" stroke-width=".7" fill="none" opacity=".6"/></svg>
<span class="t" style='left:0;top:0;font-size:17px;color:#fff;font-family:"Liberation Serif",serif;transform-origin:0 0;transform:matrix3d(1.27713,0.216311,0,0.000740792,-4.67124e-13,0.97723,0,-9.51341e-16,0,0,1,0,488,226.587,0,1);'>to</span>
<span class="t" style='left:0;top:0;font-size:20px;color:#fff;font-family:"Liberation Serif",serif;transform-origin:0 0;transform:matrix3d(-0.335556,-0.453116,0,-0.00232219,5.09046e-14,0.877863,0,1.1043e-16,0,0,1,0,466.5,240.796,0,1);letter-spacing:1.5px;'>STICK</span>
<span class="t" style='left:0;top:0;font-size:5.5px;color:#6b2a06;font-family:"Liberation Serif",serif;transform-origin:0 0;transform:matrix3d(0.236154,-0.158934,0,-0.00122571,1.97448e-13,0.971548,0,3.98012e-16,0,0,1,0,466.5,257.025,0,1);font-weight:700;letter-spacing:0.2px;'>Chip Heath &amp; Dan Heath</span></div>
<div class="a" style="left:340.600px;top:255.900px;width:323.800px;height:191.700px;border:1.600px solid #5a90f3"></div>
<div class="a" style="left:338.95px;top:254.35px;width:4.700px;height:4.700px;background:#1a73e8"></div>
<div class="a" style="left:338.95px;top:349.45px;width:4.700px;height:4.700px;background:#1a73e8"></div>
<div class="a" style="left:338.95px;top:444.45px;width:4.700px;height:4.700px;background:#1a73e8"></div>
<div class="a" style="left:499.85px;top:254.35px;width:4.700px;height:4.700px;background:#1a73e8"></div>
<div class="a" style="left:499.85px;top:444.45px;width:4.700px;height:4.700px;background:#1a73e8"></div>
<div class="a" style="left:661.25px;top:254.35px;width:4.700px;height:4.700px;background:#1a73e8"></div>
<div class="a" style="left:661.25px;top:349.45px;width:4.700px;height:4.700px;background:#1a73e8"></div>
<div class="a" style="left:661.25px;top:444.45px;width:4.700px;height:4.700px;background:#1a73e8"></div>
<div class="a" style="left:501.700px;top:241px;width:1px;height:15px;background:#5a90f3"></div>
<div class="a" style="left:499.800px;top:238.300px;width:4.800px;height:4.800px;border-radius:50%;background:#1a73e8"></div>
<div class="a" style="left:403.700px;top:276px;width:1px;height:11px;background:#333"></div>
<div class="a" style="left:314.800px;top:425.800px;width:21.500px;height:20.700px;background:#fff;border-radius:4px;box-shadow:0 .5px 2px rgba(60,64,67,.35),0 1px 3px 1px rgba(60,64,67,.12)"></div>
<svg style="left:319.500px;top:431px" width="12" height="10" viewBox="0 0 24 20"><path d="M1 7H23M1 13H17" stroke="#444746" stroke-width="2.200" fill="none"/><path d="M3 2L21 18" stroke="#fff" stroke-width="5" fill="none"/><path d="M3 2L21 18" stroke="#444746" stroke-width="2.200" fill="none"/></svg>
<div class="a" style="left:1020.800px;top:171.500px;width:1.600px;height:270.500px;background:#6b7075;border-radius:1px"></div>
<!-- ===== BOTTOM ===== -->
<div class="a" style="left:569.500px;top:486px;width:32.500px;height:1.200px;background:#8d9196;border-radius:1px"></div>
<div class="a" style="left:157.500px;top:501px;width:856px;height:32px;background:#edf2fa;border-radius:8px"></div>
<span class="t" style='left:168.00px;top:510.62px;font-size:10px;color:#1f1f1f;transform:scaleX(0.9759);transform-origin:0 50%;'>Click to add speaker notes</span>
<svg style="left:19.500px;top:514.500px" width="9.800" height="9.800" viewBox="0 0 20 20"><g fill="none" stroke="#444746" stroke-width="2.300"><rect x="1" y="1" width="7" height="7"/><rect x="12" y="1" width="7" height="7"/><rect x="1" y="12" width="7" height="7"/><rect x="12" y="12" width="7" height="7"/></g></svg>
<svg style="left:54.400px;top:516.300px" width="4.200" height="6.400" viewBox="0 0 4.200 6.400"><path d="M3.700 .4L.7 3.200 3.700 6" stroke="#444746" stroke-width="1.300" fill="none"/></svg>
<div class="a" style="left:1007.800px;top:496.400px;width:26.400px;height:26.400px;border-radius:50%;background:#fff;box-shadow:0 0 2px rgba(60,64,67,.4),0 1px 3px rgba(60,64,67,.2)"></div>
<svg style="left:1014.200px;top:506.300px" width="4.200" height="6.600" viewBox="0 0 4.200 6.600"><path d="M3.600 .5L.8 3.300 3.600 6.100" stroke="#444746" stroke-width="1.300" fill="none"/></svg>
<div class="a" style="left:0;top:543.700px;width:1024px;height:6px;background:linear-gradient(90deg,#d9f2c6 0%,#dcf3cb 20%,#d2eed8 45%,#d8f1c8 60%,#e4f2d0 80%,#d6eec9 100%);border-top:1px solid #cfd8cc"></div>
</div>
</body>
</html>
